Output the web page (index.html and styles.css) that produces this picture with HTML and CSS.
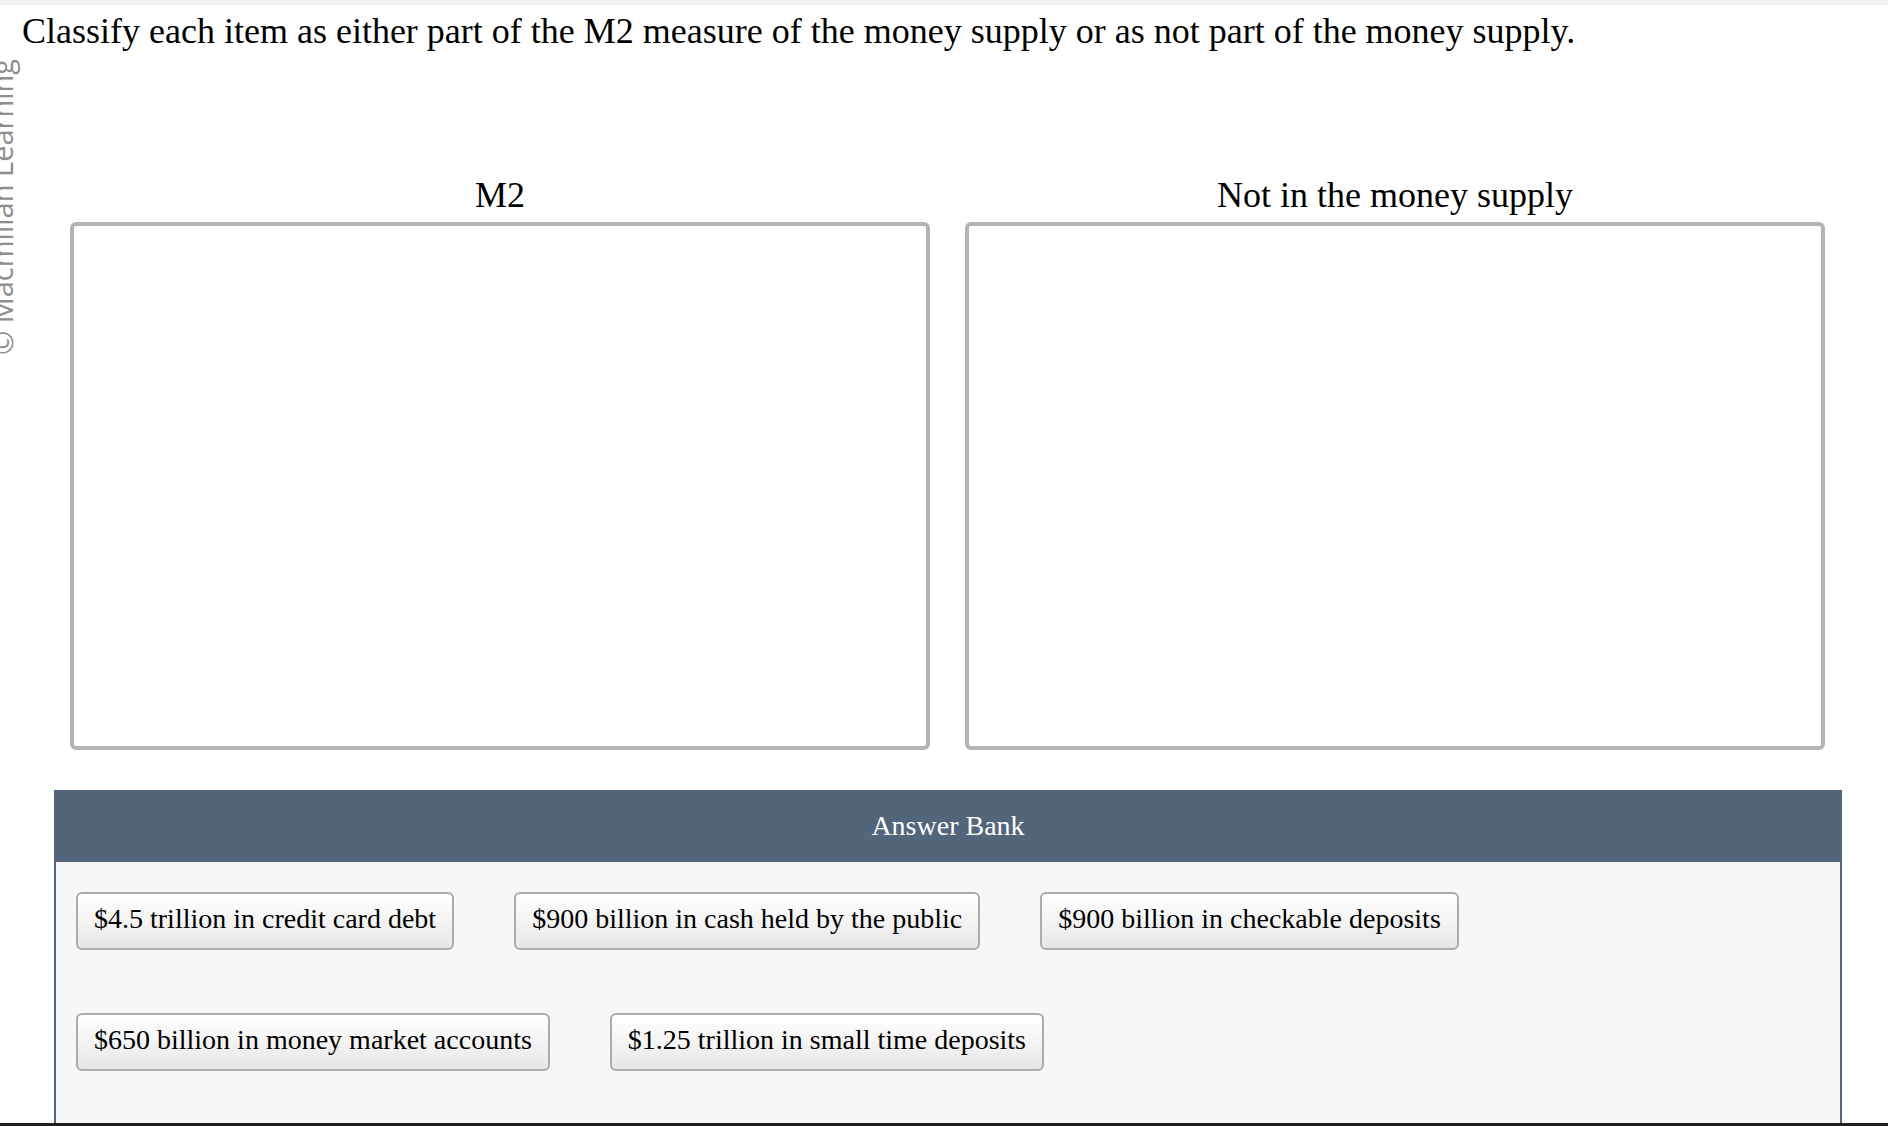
FILE: index.html
```html
<!DOCTYPE html>
<html lang="en">
<head>
<meta charset="utf-8">
<title>Classify M2</title>
<link rel="stylesheet" href="styles.css">
</head>
<body>
<div class="page">
  <div class="top-band"></div>
  <div class="watermark">© Macmillan Learning</div>
  <p class="prompt">Classify each item as either part of the M2 measure of the money supply or as not part of the money supply.</p>
  <div class="targets">
    <div class="target">
      <div class="target-label">M2</div>
      <div class="drop-box"></div>
    </div>
    <div class="target">
      <div class="target-label">Not in the money supply</div>
      <div class="drop-box"></div>
    </div>
  </div>
  <div class="bank">
    <div class="bank-header">Answer Bank</div>
    <div class="bank-body">
      <div class="chip-row">
        <div class="chip">$4.5 trillion in credit card debt</div>
        <div class="chip">$900 billion in cash held by the public</div>
        <div class="chip">$900 billion in checkable deposits</div>
      </div>
      <div class="chip-row">
        <div class="chip">$650 billion in money market accounts</div>
        <div class="chip">$1.25 trillion in small time deposits</div>
      </div>
    </div>
  </div>
  <div class="bottom-line"></div>
</div>
</body>
</html>
```

FILE: styles.css
```css
html, body {
  margin: 0;
  padding: 0;
  background: #ffffff;
}

body {
  font-family: "Liberation Serif", "Times New Roman", serif;
  color: #000;
  overflow: hidden;
}

.page {
  position: relative;
  height: 1126px;
  display: flex;
  flex-direction: column;
  overflow: hidden;
}

.top-band {
  height: 5px;
  background: #f2f2f2;
  flex: none;
}

.watermark {
  position: absolute;
  left: -13px;
  top: 355px;
  transform-origin: 0 0;
  transform: rotate(-90deg);
  white-space: nowrap;
  font-family: "Open Sans", "Liberation Sans", sans-serif;
  font-size: 29px;
  line-height: 29px;
  color: #8e8e8e;
}

.prompt {
  margin: 6px 0 0 22px;
  font-size: 36px;
  line-height: 40px;
  flex: none;
}

.targets {
  margin: 124px 63px 0 70px;
  display: grid;
  grid-template-columns: 1fr 1fr;
  column-gap: 35px;
  flex: none;
}

.target {
  display: flex;
  flex-direction: column;
  gap: 7px;
}

.target-label {
  text-align: center;
  font-size: 36px;
  line-height: 40px;
}

.drop-box {
  height: 520px;
  border: 4px solid #b4b4b4;
  border-radius: 6px;
  background: #fff;
}

.bank {
  margin: 40px 46px 0 54px;
  flex: 1;
  display: flex;
  flex-direction: column;
  min-height: 0;
}

.bank-header {
  height: 72px;
  flex: none;
  background: #53657a;
  color: #fff;
  font-size: 28px;
  display: flex;
  align-items: center;
  justify-content: center;
}

.bank-body {
  flex: 1;
  min-height: 0;
  background: #f7f7f7;
  border-left: 2px solid #53657a;
  border-right: 2px solid #53657a;
  padding: 30px 20px 0 20px;
  display: flex;
  flex-direction: column;
  row-gap: 63px;
}

.chip-row {
  display: flex;
  column-gap: 60px;
}

.chip {
  font-size: 28px;
  line-height: 32px;
  padding: 9px 16px 13px;
  border: 2px solid #acacac;
  border-radius: 6px;
  background: linear-gradient(to bottom, #ffffff 0%, #f4f4f4 50%, #e6e6e6 100%);
  white-space: nowrap;
}

.bottom-line {
  height: 3px;
  flex: none;
  background: #1e1e1e;
}
```
